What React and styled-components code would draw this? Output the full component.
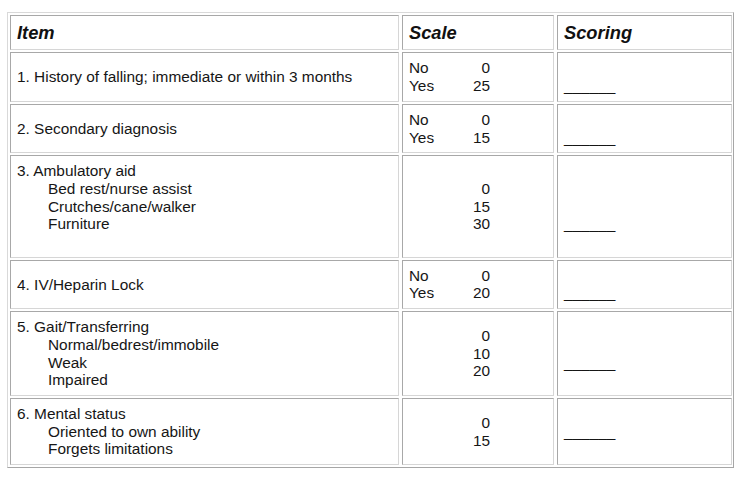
import React from 'react'
import styled, { createGlobalStyle } from 'styled-components'

const GlobalStyle = createGlobalStyle`
html, body {
margin: 0;
padding: 0;
background: #ffffff;
}
body {
font-family: "Liberation Sans", Arial, sans-serif;
color: #161616;
}
`

const ROWS = [
  {
    title: '1. History of falling; immediate or within 3 months',
    subs: [],
    scale: [['No', '0'], ['Yes', '25']],
    lead: 1,
  },
  {
    title: '2. Secondary diagnosis',
    subs: [],
    scale: [['No', '0'], ['Yes', '15']],
    lead: 1,
  },
  {
    title: '3. Ambulatory aid',
    subs: ['Bed rest/nurse assist', 'Crutches/cane/walker', 'Furniture', ''],
    scale: [['', '0'], ['', '15'], ['', '30']],
    lead: 2,
  },
  {
    title: '4. IV/Heparin Lock',
    subs: [],
    scale: [['No', '0'], ['Yes', '20']],
    lead: 1,
  },
  {
    title: '5. Gait/Transferring',
    subs: ['Normal/bedrest/immobile', 'Weak', 'Impaired'],
    scale: [['', '0'], ['', '10'], ['', '20']],
    lead: 1,
  },
  {
    title: '6. Mental status',
    subs: ['Oriented to own ability', 'Forgets limitations'],
    scale: [['', '0'], ['', '15']],
    lead: 0,
  },
]

const App = () => {
  return (
    <>
      <GlobalStyle />
      <Page>
        <Table>
          <HeadCell>Item</HeadCell>
          <HeadCell>Scale</HeadCell>
          <HeadCell>Scoring</HeadCell>

          {ROWS.map((row, i) => (
            <React.Fragment key={i}>
              <Cell>
                <Line>{row.title}</Line>
                {row.subs.map((sub, j) => (
                  <SubLine key={j}>{sub || '\u00a0'}</SubLine>
                ))}
              </Cell>
              <Cell>
                <ScaleList>
                  {row.scale.map(([label, value], j) => (
                    <React.Fragment key={j}>
                      <Line>{label}</Line>
                      <Points>{value}</Points>
                    </React.Fragment>
                  ))}
                </ScaleList>
              </Cell>
              <Cell>
                {Array.from({ length: row.lead }).map((_, j) => (
                  <Line key={j}>{'\u00a0'}</Line>
                ))}
                <Line>______</Line>
              </Cell>
            </React.Fragment>
          ))}
        </Table>
      </Page>
    </>
  )
}

const Page = styled.div`
padding: 12px 0 0 7px;
`
const Table = styled.div`
display: grid;
grid-template-columns: 389px 152px 175px;
column-gap: 3px;
row-gap: 2px;
width: max-content;
padding: 2px 1px 2px 2px;
border: 1px solid;
border-color: #d9d9d9 #a6a6a6 #a6a6a6 #d9d9d9;
`
const Cell = styled.div`
display: flex;
flex-direction: column;
justify-content: center;
padding: 6px 6px;
border: 1px solid;
border-color: #a8a8a8 #d6d6d6 #d6d6d6 #a8a8a8;
font-size: 15.4px;
line-height: 17.7px;
`
const HeadCell = styled(Cell)`
font-size: 18.3px;
line-height: 21.4px;
font-weight: bold;
font-style: italic;
color: #111111;
`
const Line = styled.div`
white-space: pre;
`
const SubLine = styled(Line)`
padding-left: 31px;
`
const ScaleList = styled.div`
display: grid;
grid-template-columns: 1fr auto;
width: 81px;
`
const Points = styled.div`
text-align: right;
`

export default App
